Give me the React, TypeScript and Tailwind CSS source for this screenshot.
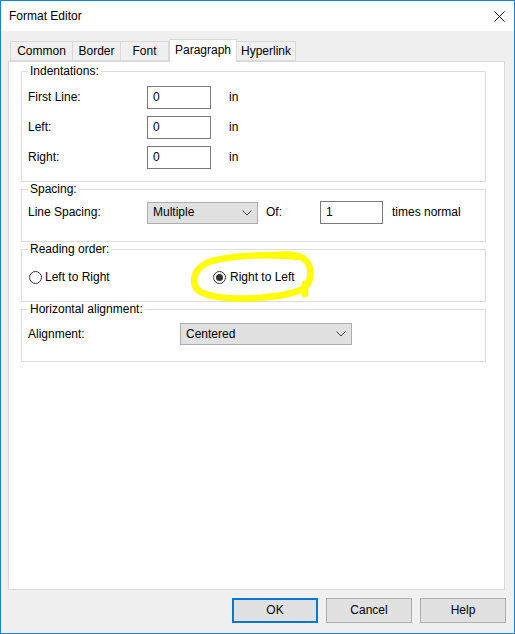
import React from 'react';

const Chevron = () => (
  <svg width="10" height="6" viewBox="0 0 10 6" className="shrink-0">
    <path d="M0.5 0.5 L5 5 L9.5 0.5" fill="none" stroke="#404040" strokeWidth="1" />
  </svg>
);

const Radio = ({ checked }: { checked?: boolean }) => (
  <span className="w-[13px] h-[13px] rounded-full border border-[#333333] bg-white flex items-center justify-center shrink-0">
    {checked && <span className="w-[7px] h-[7px] rounded-full bg-[#333333]" />}
  </span>
);

const TextBox = ({ value, className }: { value: string; className: string }) => (
  <div className={`h-[23px] border border-[#7a7a7a] bg-white pl-[5px] flex items-center ${className}`}>
    {value}
  </div>
);

const Select = ({ value, className }: { value: string; className: string }) => (
  <div className={`h-[22px] border border-[#adadad] bg-[#e1e1e1] pl-[5px] pr-[5px] flex items-center justify-between ${className}`}>
    <span>{value}</span>
    <Chevron />
  </div>
);

const Group = ({ title, className, children }: { title: string; className: string; children: React.ReactNode }) => (
  <fieldset className={`w-[465px] border border-[#dcdcdc] px-[6px] ${className}`}>
    <legend className="px-[2px] leading-[14px]">{title}</legend>
    {children}
  </fieldset>
);

const Tab = ({ label, width, active }: { label: string; width: string; active?: boolean }) =>
  active ? (
    <div className={`${width} h-[23px] -mb-px relative z-10 bg-white border border-b-0 border-[#d9d9d9] flex items-center justify-center pb-[2px]`}>
      {label}
    </div>
  ) : (
    <div className={`${width} h-[20px] bg-[#f0f0f0] border border-[#d9d9d9] -ml-px first:ml-0 flex items-center justify-center`}>
      {label}
    </div>
  );

const Button = ({ label, primary }: { label: string; primary?: boolean }) => (
  <div
    className={`w-[86px] h-[25px] bg-[#e1e1e1] flex items-center justify-center ${
      primary ? 'border-2 border-[#0078d7]' : 'border border-[#adadad]'
    }`}
  >
    {label}
  </div>
);

const indentRows = ['First Line:', 'Left:', 'Right:'];

export default function App() {
  return (
    <div className="relative w-[515px] h-[634px] border border-[#1883d7] bg-[#f0f0f0] flex flex-col font-['Liberation_Sans',Arial,sans-serif] text-[12px] leading-[15px] text-black">
      <div className="h-[30px] bg-white flex items-center justify-between pl-[8px] pr-[9px]">
        <span>Format Editor</span>
        <svg width="11" height="11" viewBox="0 0 11 11">
          <path d="M0.5 0.5 L10.5 10.5 M10.5 0.5 L0.5 10.5" stroke="#111111" strokeWidth="1" />
        </svg>
      </div>

      <div className="flex-1 flex flex-col pl-[7px] pt-[8px]">
        <div className="flex items-end pl-[2px]">
          <Tab label="Common" width="w-[63px]" />
          <Tab label="Border" width="w-[49px]" />
          <Tab label="Font" width="w-[49px]" />
          <Tab label="Paragraph" width="w-[68px]" active />
          <Tab label="Hyperlink" width="w-[60px]" />
        </div>

        <div className="w-[497px] flex-1 bg-white border border-[#d9d9d9] pl-[12px] pt-[2px]">
          <Group title="Indentations:" className="pt-[8px] pb-[12px]">
            <div className="flex flex-col gap-[7px]">
              {indentRows.map((row) => (
                <div key={row} className="flex items-center">
                  <span className="w-[119px]">{row}</span>
                  <TextBox value="0" className="w-[64px]" />
                  <span className="ml-[18px]">in</span>
                </div>
              ))}
            </div>
          </Group>

          <Group title="Spacing:" className="pt-[5px] pb-[17px]">
            <div className="flex items-center h-[23px]">
              <span className="w-[119px]">Line Spacing:</span>
              <Select value="Multiple" className="w-[111px]" />
              <span className="ml-[8px] w-[54px]">Of:</span>
              <TextBox value="1" className="w-[63px]" />
              <span className="ml-[9px]">times normal</span>
            </div>
          </Group>

          <Group title="Reading order:" className="pt-[13px] pb-[16px]">
            <div className="flex items-center h-[16px]">
              <label className="w-[185px] flex items-center gap-[3px] pl-[1px]">
                <Radio />
                <span>Left to Right</span>
              </label>
              <label className="flex items-center gap-[4px]">
                <Radio checked />
                <span>Right to Left</span>
              </label>
            </div>
          </Group>

          <Group title="Horizontal alignment:" className="pt-[7px] pb-[16px]">
            <div className="flex items-center">
              <span className="w-[152px]">Alignment:</span>
              <Select value="Centered" className="w-[172px]" />
            </div>
          </Group>
        </div>
      </div>

      <div className="flex justify-end gap-[8px] pt-[8px] pb-[10px] pr-[8px]">
        <Button label="OK" primary />
        <Button label="Cancel" />
        <Button label="Help" />
      </div>

      <svg className="absolute left-[-1px] top-[-1px] pointer-events-none" width="515" height="634" viewBox="0 0 515 634">
        <path
          d="M300 257 C270 254 235 255 212 261 C196 266 191 278 196 288 C203 297 230 300 258 298 C283 296 302 292 307 285 C313 276 311 264 303 258 C296 254 285 254 275 255 M305 284 L305 294"
          fill="none"
          stroke="#ffff00"
          strokeWidth="6.5"
          strokeLinecap="round"
          strokeLinejoin="round"
        />
      </svg>
    </div>
  );
}
